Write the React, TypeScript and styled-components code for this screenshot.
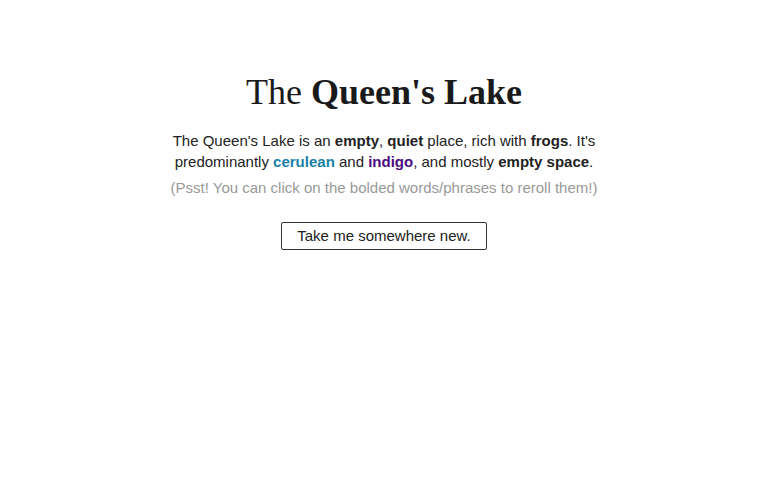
import React from "react";
import styled, { createGlobalStyle } from "styled-components";

const Global = createGlobalStyle`
  html, body { margin: 0; padding: 0; background: #fff; }
  body { font-family: "Liberation Sans", Arial, sans-serif; color: #222; }
`;

const Page = styled.main`
  display: flex;
  flex-direction: column;
  align-items: center;
  padding-top: 69px;
`;

const Title = styled.h1`
  font-family: "Liberation Serif", "Times New Roman", serif;
  font-weight: normal;
  font-size: 36px;
  line-height: 46px;
  margin: 0 0 15px;
  color: #1a1a1a;
  b { font-weight: bold; }
`;

const Description = styled.p`
  max-width: 440px;
  margin: 0;
  text-align: center;
  font-size: 15px;
  line-height: 21px;
  color: #222;
`;

const Word = styled.b<{ $color?: string }>`
  font-weight: bold;
  cursor: pointer;
  color: ${(p) => p.$color || "#222"};
`;

const Hint = styled.p`
  margin: 5px 0 0;
  font-size: 15px;
  line-height: 21px;
  color: #999;
  text-align: center;
`;

const Button = styled.button`
  margin-top: 24px;
  font-family: "Liberation Sans", Arial, sans-serif;
  font-size: 15px;
  color: #222;
  background: #fff;
  border: 1px solid #333;
  border-radius: 2px;
  padding: 5px 15px;
  line-height: 16px;
  cursor: pointer;
`;

export default function App() {
  return (
    <>
      <Global />
      <Page>
        <Title>
          The <b>Queen's Lake</b>
        </Title>
        <Description>
          The Queen's Lake is an <Word>empty</Word>, <Word>quiet</Word> place, rich with{" "}
          <Word>frogs</Word>. It's predominantly <Word $color="#1a7fa6">cerulean</Word> and{" "}
          <Word $color="#4b0a82">indigo</Word>, and mostly <Word>empty space</Word>.
        </Description>
        <Hint>(Psst! You can click on the bolded words/phrases to reroll them!)</Hint>
        <Button>Take me somewhere new.</Button>
      </Page>
    </>
  );
}
